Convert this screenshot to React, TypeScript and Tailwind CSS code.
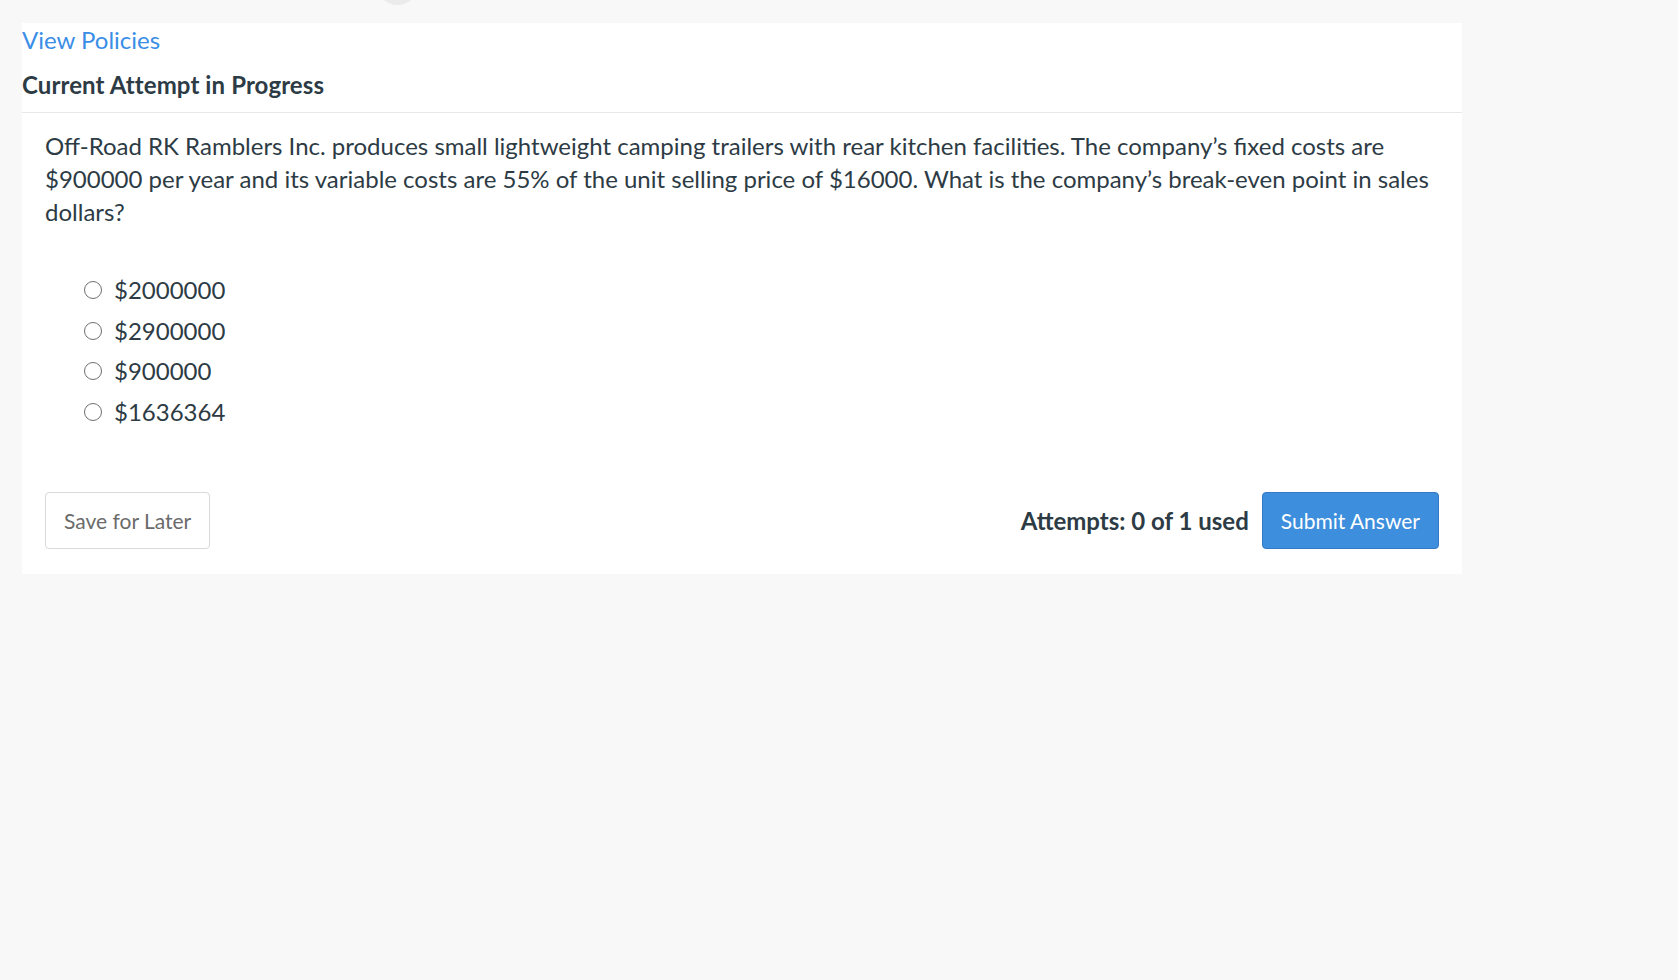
import { useState } from 'react';

// Answer options for the question
const options = ['$2000000', '$2900000', '$900000', '$1636364'];

export default function App() {
  const [selected, setSelected] = useState<number | null>(null);

  return (
    <div
      className="relative min-h-screen bg-[#f8f8f8] pl-[22px] pt-[23px] text-[#2d3b45]"
      style={{ fontFamily: 'Lato, "Open Sans", sans-serif' }}
    >
      {/* avatar peeking in from the top bar */}
      <div className="absolute left-[377px] top-[-36px] h-[41px] w-[41px] rounded-full bg-[#ebebeb]" />

      <div className="w-[1440px] bg-white pb-[25px]">
        {/* Header */}
        <div className="border-b border-[#e8e8e8] pb-[13px]">
          <a href="#" className="block text-[24px] leading-[33px] text-[#3a8ee6]">
            View Policies
          </a>
          <h2 className="mt-[15px] text-[24px] font-bold leading-[28px] tracking-[0.1px] text-[#2d3b45]">
            Current Attempt in Progress
          </h2>
        </div>

        {/* Question */}
        <div className="px-[23px] pt-[16px]">
          <p className="text-[24px] leading-[33px]">
            Off-Road RK Ramblers Inc. produces small lightweight camping trailers with rear kitchen facilities. The company’s fixed costs are $900000 per year and its variable costs are 55% of the unit selling price of $16000. What is the company’s break-even point in sales dollars?
          </p>

          <div className="mt-[42px] flex flex-col pl-[39px]">
            {options.map((opt, i) => (
              <label
                key={opt}
                className="flex h-[40.5px] cursor-pointer items-center gap-[12px] text-[24px]"
                onClick={() => setSelected(i)}
              >
                <span className="flex h-[18px] w-[18px] items-center justify-center rounded-full border-[1.5px] border-[#6f6f6f] bg-white">
                  {selected === i && <span className="h-[9px] w-[9px] rounded-full bg-[#3a8ee6]" />}
                </span>
                <span className="leading-none">{opt}</span>
              </label>
            ))}
          </div>

          {/* Footer actions */}
          <div className="mt-[60px] flex items-center justify-between">
            <button className="h-[57px] rounded-[4px] border border-[#d9d9d9] bg-white px-[18px] text-[21px] text-[#6b6b6b]">
              Save for Later
            </button>
            <div className="flex items-center gap-[13px]">
              <span className="text-[24px] font-bold text-[#2d3b45]">Attempts: 0 of 1 used</span>
              <button className="h-[57px] rounded-[4px] border border-[#3579c6] bg-[#3d8edc] px-[18px] text-[21px] text-white">
                Submit Answer
              </button>
            </div>
          </div>
        </div>
      </div>
    </div>
  );
}
